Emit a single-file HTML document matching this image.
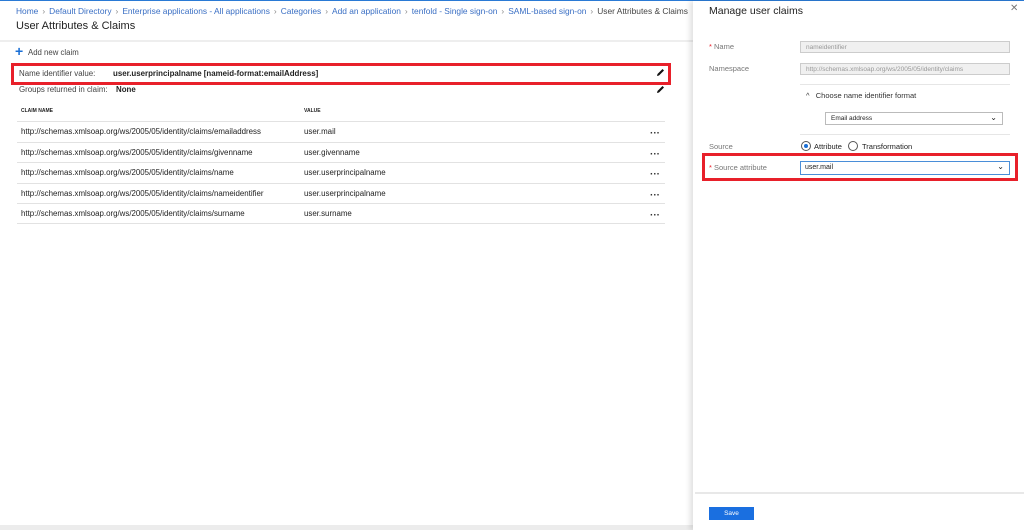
<!DOCTYPE html>
<html><head><meta charset="utf-8"><style>
*{box-sizing:border-box;margin:0;padding:0}
body{width:1024px;height:530px;position:relative;overflow:hidden;background:#fff;font-family:"Liberation Sans",sans-serif;color:#222}
.a{position:absolute;white-space:nowrap}
.bc{font-size:8.4px;color:#3a6fc4}
.s{color:#888;margin:0 4px}
.row{position:absolute;left:17px;width:648px;height:1px;background:#e2e2e2}
.t{font-size:7.9px}
.dots{position:absolute;left:650px;font-size:10px;font-weight:bold;color:#333}
.lbl{font-size:7.5px;color:#777}
.inp{position:absolute;border:1px solid #ccc;background:#f0f0f0;font-size:6.5px;color:#999;padding:2px 5px}
</style></head><body>
<div class="a" style="left:0;top:0;width:1024px;height:1px;background:#2a7ad5"></div>
<div class="a bc" style="left:16px;top:6px">Home<span class="s">›</span>Default Directory<span class="s">›</span>Enterprise applications - All applications<span class="s">›</span>Categories<span class="s">›</span>Add an application<span class="s">›</span>tenfold - Single sign-on<span class="s">›</span>SAML-based sign-on<span class="s">›</span><span style="color:#444">User Attributes &amp; Claims</span></div>
<div class="a" style="left:16px;top:20px;font-size:11px;color:#222">User Attributes &amp; Claims</div>
<div class="a" style="left:0;top:40px;width:695px;height:2px;background:#eee"></div>
<div class="a" style="left:15px;top:45px;font-size:14px;color:#1a6fd6;font-weight:bold;line-height:12px">+</div>
<div class="a" style="left:28px;top:48px;font-size:7.8px;color:#444">Add new claim</div>
<div class="a" style="left:11px;top:63px;width:660px;height:22px;border:3px solid #e8202a"></div>
<div class="a t" style="left:19px;top:69px;color:#444">Name identifier value:</div>
<div class="a t" style="left:113px;top:69px;font-weight:bold">user.userprincipalname [nameid-format:emailAddress]</div>
<svg class="a" style="left:656px;top:68px" width="9" height="9" viewBox="0 0 9 9"><path d="M1 8 L1.5 6 L6.5 1 L8 2.5 L3 7.5 Z" fill="#111"/></svg>
<div class="a t" style="left:19px;top:85px;color:#444">Groups returned in claim:</div>
<div class="a t" style="left:116px;top:85px;font-weight:bold">None</div>
<svg class="a" style="left:656px;top:85px" width="9" height="9" viewBox="0 0 9 9"><path d="M1 8 L1.5 6 L6.5 1 L8 2.5 L3 7.5 Z" fill="#111"/></svg>
<div class="a" style="left:21px;top:108px;font-size:5px;font-weight:bold">CLAIM NAME</div>
<div class="a" style="left:304px;top:108px;font-size:5px;font-weight:bold">VALUE</div>
<div class="row" style="top:121px"></div>
<div class="a t" style="left:21px;top:127px">http://schemas.xmlsoap.org/ws/2005/05/identity/claims/emailaddress</div><div class="a t" style="left:304px;top:127px">user.mail</div><div class="a dots" style="top:128px">···</div>
<div class="row" style="top:142px"></div>
<div class="a t" style="left:21px;top:148px">http://schemas.xmlsoap.org/ws/2005/05/identity/claims/givenname</div><div class="a t" style="left:304px;top:148px">user.givenname</div><div class="a dots" style="top:149px">···</div>
<div class="row" style="top:162px"></div>
<div class="a t" style="left:21px;top:168px">http://schemas.xmlsoap.org/ws/2005/05/identity/claims/name</div><div class="a t" style="left:304px;top:168px">user.userprincipalname</div><div class="a dots" style="top:169px">···</div>
<div class="row" style="top:183px"></div>
<div class="a t" style="left:21px;top:189px">http://schemas.xmlsoap.org/ws/2005/05/identity/claims/nameidentifier</div><div class="a t" style="left:304px;top:189px">user.userprincipalname</div><div class="a dots" style="top:190px">···</div>
<div class="row" style="top:203px"></div>
<div class="a t" style="left:21px;top:209px">http://schemas.xmlsoap.org/ws/2005/05/identity/claims/surname</div><div class="a t" style="left:304px;top:209px">user.surname</div><div class="a dots" style="top:210px">···</div>
<div class="row" style="top:223px"></div>
<div class="a" style="left:0;top:525px;width:695px;height:5px;background:#ececec"></div>
<div class="a" style="left:693px;top:1px;width:331px;height:529px;background:#fff;box-shadow:-3px 0 5px rgba(0,0,0,.12)"></div>
<div class="a" style="left:709px;top:5px;font-size:10.5px;color:#222">Manage user claims</div>
<div class="a" style="left:1010px;top:3px;font-size:10px;color:#777">✕</div>
<div class="a lbl" style="left:709px;top:42px"><span style="color:#e8202a">*</span> Name</div>
<div class="inp" style="left:800px;top:41px;width:210px;height:12px">nameidentifier</div>
<div class="a lbl" style="left:709px;top:64px">Namespace</div>
<div class="inp" style="left:800px;top:63px;width:210px;height:12px">http://schemas.xmlsoap.org/ws/2005/05/identity/claims</div>
<div class="a" style="left:800px;top:84px;width:210px;height:1px;background:#e6e6e6"></div>
<div class="a" style="left:806px;top:91px;font-size:7.5px;color:#333">^&nbsp;&nbsp; Choose name identifier format</div>
<div class="a" style="left:825px;top:112px;width:178px;height:13px;border:1px solid #bbb;font-size:6.5px;padding:2px 5px;color:#222">Email address<span style="position:absolute;right:5px;top:0;font-size:8px">⌄</span></div>
<div class="a" style="left:800px;top:134px;width:210px;height:1px;background:#e6e6e6"></div>
<div class="a lbl" style="left:709px;top:142px">Source</div>
<div class="a" style="left:801px;top:141px;width:10px;height:10px;border:1px solid #555;border-radius:50%"><div style="position:absolute;left:2px;top:2px;width:4px;height:4px;border-radius:50%;background:#1a6fd6"></div></div>
<div class="a" style="left:814px;top:142px;font-size:7.5px">Attribute</div>
<div class="a" style="left:848px;top:141px;width:10px;height:10px;border:1px solid #555;border-radius:50%"></div>
<div class="a" style="left:862px;top:142px;font-size:7.5px">Transformation</div>
<div class="a" style="left:702px;top:153px;width:316px;height:28px;border:3px solid #e8202a"></div>
<div class="a lbl" style="left:709px;top:163px"><span style="color:#e8202a">*</span> Source attribute</div>
<div class="a" style="left:800px;top:161px;width:210px;height:14px;border:1px solid #4a8ed8;font-size:7px;padding:2px 4px;color:#222">user.mail<span style="position:absolute;right:5px;top:0;font-size:8px">⌄</span></div>
<div class="a" style="left:695px;top:492px;width:329px;height:2px;background:#e8e8e8"></div>
<div class="a" style="left:709px;top:507px;width:45px;height:13px;background:#1a6fe0;color:#fff;font-size:6.5px;text-align:center;line-height:13px">Save</div>
</body></html>
